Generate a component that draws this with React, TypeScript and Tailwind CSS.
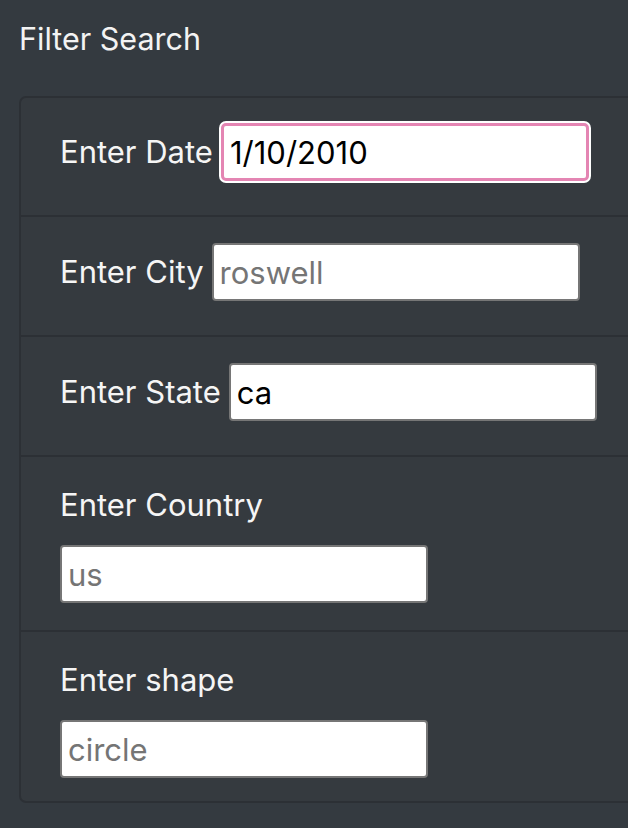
import { useState } from "react";

type Field = {
  label: string;
  value?: string;
  placeholder?: string;
  stacked?: boolean;
  focused?: boolean;
};

const fields: Field[] = [
  { label: "Enter Date", value: "1/10/2010", focused: true },
  { label: "Enter City", placeholder: "roswell" },
  { label: "Enter State", value: "ca" },
  { label: "Enter Country", placeholder: "us", stacked: true },
  { label: "Enter shape", placeholder: "circle", stacked: true },
];

function FilterInput({ field }: { field: Field }) {
  const [val, setVal] = useState(field.value ?? "");
  return (
    <input
      type="text"
      value={val}
      placeholder={field.placeholder}
      onChange={(e) => setVal(e.target.value)}
      className={
        "w-[368px] h-[58px] bg-white text-black text-[31px] pl-[6px] outline-none placeholder:text-[#757575] " +
        (field.focused
          ? "border-[3px] border-[#e485b3] rounded-[5px] shadow-[0_0_0_2px_#ffffff]"
          : "border-2 border-[#767676] rounded-[4px]")
      }
    />
  );
}

export default function App() {
  return (
    <div
      className="min-h-[828px] w-[628px] overflow-hidden bg-[#343a40] text-white"
      style={{ fontFamily: "Inter, 'Noto Sans', sans-serif" }}
    >
      <h2 className="pl-[19px] pt-[19px] h-[96px] text-[30.5px] leading-[40px] text-[#f3f3f3]">Filter Search</h2>

      <div className="ml-[19px] w-[640px] rounded-[7px] border-2 border-[#2c3035] bg-[#353a3f]">
        {fields.map((f, i) => (
          <div
            key={f.label}
            className={
              "pl-[39px] " +
              (i > 0 ? "border-t-2 border-[#2c3035] " : "") +
              (f.stacked
                ? i === fields.length - 1
                  ? "pt-[24px] pb-[23px]"
                  : "pt-[24px] pb-[27px]"
                : i === 0
                ? "pt-[23px] pb-[32px]"
                : "pt-[26px] pb-[34px]")
            }
          >
            {f.stacked ? (
              <div>
                <div className="h-[48px] leading-[48px] text-[31px] text-[#f5f5f5]">{f.label}</div>
                <div className="mt-[16px]">
                  <FilterInput field={f} />
                </div>
              </div>
            ) : (
              <div className={"flex items-center gap-[8px] " + (f.focused ? "py-[2px]" : "")}>
                <span className="text-[31px] text-[#f5f5f5]">{f.label}</span>
                <FilterInput field={f} />
              </div>
            )}
          </div>
        ))}
      </div>
    </div>
  );
}
